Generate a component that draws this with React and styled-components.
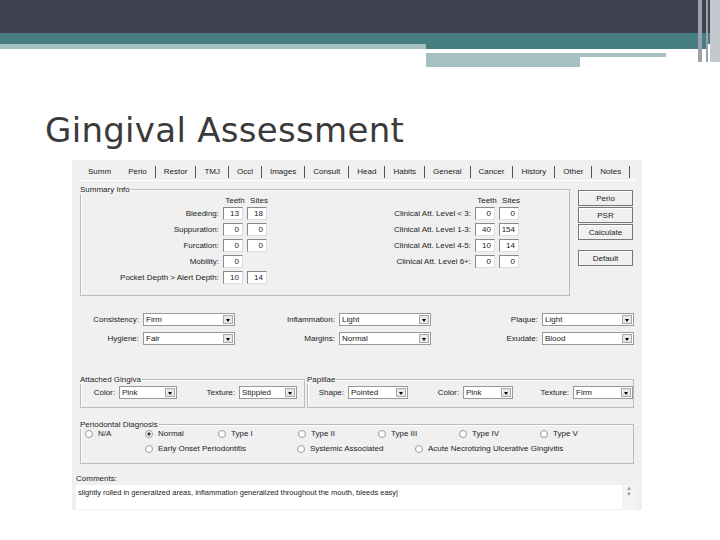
import React from "react";
import styled, { createGlobalStyle } from "styled-components";

const Global = createGlobalStyle`
  html,body{margin:0;padding:0;background:#fff;}
  body{width:720px;height:540px;overflow:hidden;}
`;
const Slide = styled.div`position:relative;width:720px;height:540px;background:#fff;`;
const Deco = styled.div`position:absolute;left:${p=>p.x}px;top:${p=>p.y}px;width:${p=>p.w}px;height:${p=>p.h}px;background:${p=>p.c};`;
const Title = styled.h1`
  margin:0;padding:110px 0 0 45px;font:34px "DejaVu Sans",sans-serif;color:#3a3a3a;letter-spacing:0.3px;height:50px;
`;
const Shot = styled.div`
  margin:0 0 0 72px;width:570px;height:350px;background:#f0f0f0;
  font:8px "Liberation Sans",sans-serif;color:#222;box-sizing:border-box;padding:3px 6px 0 4px;
  display:flex;flex-direction:column;
`;
const Tabs = styled.div`display:flex;height:17px;align-items:center;border-bottom:1px solid #fff;margin-left:4px;`;
const Tab = styled.div`padding:0 8px;border-right:1px solid ${p=>p.first?"transparent":"#555"};line-height:12px;`;
const Group = styled.fieldset`
  margin:${p=>p.m||"0"};padding:${p=>p.pad||"0"};border:1px solid #bbb;box-shadow:inset 1px 1px #fff;
  width:${p=>p.w}px;height:${p=>p.h}px;box-sizing:border-box;position:relative;
  legend{padding:0 1px;font-size:8px;margin-left:-2px;}
`;
const Row = styled.div`display:flex;align-items:center;gap:${p=>p.gap||0}px;`;
const Label = styled.span`width:${p=>p.w}px;text-align:right;padding-right:4px;box-sizing:border-box;white-space:nowrap;`;
const Num = styled.div`
  width:${p=>p.w||20}px;height:13px;background:#fff;border:1px solid #888;border-right-color:#ddd;border-bottom-color:#ddd;
  box-sizing:border-box;text-align:right;padding-right:3px;line-height:11px;margin-right:4px;
`;
const Btn = styled.div`
  width:55px;height:16px;border:1px solid #777;box-shadow:inset 1px 1px #fff;background:#f0f0f0;
  text-align:center;line-height:15px;box-sizing:border-box;margin-bottom:1px;
`;
const Select = styled.div`
  width:${p=>p.w}px;height:13px;background:#fff;border:1px solid #999;box-sizing:border-box;display:flex;align-items:center;
  padding-left:2px;position:relative;
`;
const Arrow = styled.div`
  position:absolute;right:1px;top:1px;width:10px;height:9px;background:#e8e8e8;border:1px solid #aaa;box-sizing:border-box;
  &::after{content:"";position:absolute;left:2px;top:3px;border:2px solid transparent;border-top:3px solid #000;}
`;
const Radio = styled.span`
  display:inline-flex;align-items:center;gap:5px;width:${p=>p.w}px;
  &::before{content:"";width:6px;height:6px;border-radius:50%;border:1px solid #999;background:${p=>p.on?"radial-gradient(#333 35%,#fff 40%)":"#fff"};}
`;
const Comment = styled.div`display:flex;height:24px;margin-top:2px;`;
const Text = styled.div`flex:1;background:#fff;padding:3px 2px;font-size:7.5px;`;
const Scroll = styled.div`width:14px;background:#f4f4f4;color:#999;font-size:6px;text-align:center;`;

const Sel=({w,v})=><Select w={w}>{v}<Arrow/></Select>;

export default function App(){
  const tabs=["Summ","Perio","Restor","TMJ","Occl","Images","Consult","Head","Habits","General","Cancer","History","Other","Notes"];
  const left=[["Bleeding:","13","18"],["Suppuration:","0","0"],["Furcation:","0","0"],["Mobility:","0",null],["Pocket Depth > Alert Depth:","10","14"]];
  const right=[["Clinical Att. Level < 3:","0","0"],["Clinical Att. Level 1-3:","40","154"],["Clinical Att. Level 4-5:","10","14"],["Clinical Att. Level 6+:","0","0"]];
  return <Slide><Global/>
    <Deco x={0} y={0} w={720} h={33} c="#41424f"/>
    <Deco x={0} y={33} w={720} h={11} c="#467e82"/>
    <Deco x={426} y={44} w={280} h={5} c="#467e82"/>
    <Deco x={0} y={44} w={426} h={5} c="#a6bfc1"/>
    <Deco x={426} y={53} w={240} h={4} c="#a6bfc1"/>
    <Deco x={426} y={57} w={154} h={10} c="#a6bfc1"/>
    <Deco x={698} y={0} w={4} h={62} c="#9aa3ab"/>
    <Deco x={706} y={0} w={2} h={62} c="#9aa3ab"/>
    <Deco x={710} y={0} w={10} h={62} c="#c5c8ce"/>
    <Title>Gingival Assessment</Title>
    <Shot>
      <Tabs>{tabs.map((t,i)=><Tab key={t} first={i<1}>{t}</Tab>)}</Tabs>
      <Row style={{alignItems:"flex-start",marginTop:4}}>
        <Group w={490} h={111} m="0 8px 0 4px" pad="0">
          <legend>Summary Info</legend>
          <Row style={{marginTop:1,alignItems:"flex-start"}}>
            <div>
              <Row style={{height:10}}><Label w={142}/><span style={{width:24,textAlign:"center"}}>Teeth</span><span style={{width:24,textAlign:"center"}}>Sites</span></Row>
              {left.map(r=><Row key={r[0]} style={{height:16}}><Label w={142}>{r[0]}</Label><Num>{r[1]}</Num>{r[2]&&<Num>{r[2]}</Num>}</Row>)}
            </div>
            <div style={{marginLeft:110}}>
              <Row style={{height:10}}><Label w={94}/><span style={{width:24,textAlign:"center"}}>Teeth</span><span style={{width:24,textAlign:"center"}}>Sites</span></Row>
              {right.map(r=><Row key={r[0]} style={{height:16}}><Label w={94}>{r[0]}</Label><Num>{r[1]}</Num><Num>{r[2]}</Num></Row>)}
            </div>
          </Row>
        </Group>
        <div style={{marginTop:5}}>
          <Btn>Perio</Btn><Btn>PSR</Btn><Btn>Calculate</Btn><div style={{height:9}}/><Btn>Default</Btn>
        </div>
      </Row>
      <div style={{marginTop:17,display:"grid",gridTemplateColumns:"160px 200px 200px",rowGap:6}}>
        <Row><Label w={67}>Consistency:</Label><Sel w={92} v="Firm"/></Row>
        <Row style={{marginLeft:-4}}><Label w={107}>Inflammation:</Label><Sel w={92} v="Light"/></Row>
        <Row style={{marginLeft:-4}}><Label w={110}>Plaque:</Label><Sel w={92} v="Light"/></Row>
        <Row><Label w={67}>Hygiene:</Label><Sel w={92} v="Fair"/></Row>
        <Row style={{marginLeft:-4}}><Label w={107}>Margins:</Label><Sel w={92} v="Normal"/></Row>
        <Row style={{marginLeft:-4}}><Label w={110}>Exudate:</Label><Sel w={92} v="Blood"/></Row>
      </div>
      <Row style={{marginTop:30,alignItems:"flex-start"}}>
        <Group w={225} h={33} m="0 2px 0 4px"><legend>Attached Gingiva</legend>
          <Row style={{marginTop:2}}><Label w={38}>Color:</Label><Sel w={58} v="Pink"/><Label w={62}>Texture:</Label><Sel w={58} v="Stippled"/></Row>
        </Group>
        <Group w={327} h={33}><legend>Papillae</legend>
          <Row style={{marginTop:2}}><Label w={40}>Shape:</Label><Sel w={60} v="Pointed"/><Label w={55}>Color:</Label><Sel w={50} v="Pink"/><Label w={60}>Texture:</Label><Sel w={60} v="Firm"/></Row>
        </Group>
      </Row>
      <Group w={554} h={44} m="12px 0 0 4px"><legend>Periodontal Diagnosis</legend>
        <Row style={{paddingLeft:4}}>
          <Radio w={60}>N/A</Radio><Radio w={73} on>Normal</Radio><Radio w={80}>Type I</Radio><Radio w={80}>Type II</Radio><Radio w={81}>Type III</Radio><Radio w={81}>Type IV</Radio><Radio w={60}>Type V</Radio>
        </Row>
        <Row style={{paddingLeft:64,marginTop:6}}>
          <Radio w={152}>Early Onset Periodontitis</Radio><Radio w={118}>Systemic Associated</Radio><Radio w={200}>Acute Necrotizing Ulcerative Gingivitis</Radio>
        </Row>
      </Group>
      <div style={{marginTop:10}}>Comments:</div>
      <Comment><Text>slightly rolled in generalized areas, inflammation generalized throughout the mouth, bleeds easy|</Text><Scroll>▲<br/>▼</Scroll></Comment>
    </Shot>
  </Slide>;
}
